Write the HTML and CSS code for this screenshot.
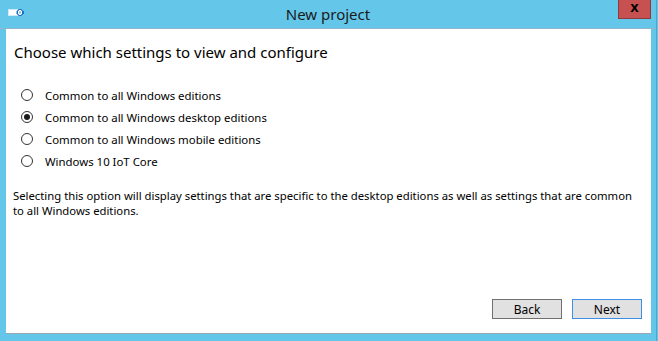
FILE: index.html
```html
<!DOCTYPE html>
<html>
<head>
<meta charset="utf-8">
<link rel="stylesheet" href="styles.css">
</head>
<body>
<div class="window">
  <div class="titlebar">
    <svg class="app-icon" width="16" height="8" viewBox="0 0 16 8">
      <rect x="0.5" y="0.5" width="10" height="6" fill="#ffffff" stroke="#cfeaf6"/>
      <path d="M9.5 1.5h1v-1h3v1h1v4h-1v1h-3v-1h-1z" fill="#ffffff" stroke="#1f6fc4" stroke-width="1"/>
      <rect x="11" y="2.5" width="2" height="2" fill="#64c7ea"/>
      <rect x="15" y="2" width="1" height="3" fill="#1f6fc4"/>
      <rect x="8.5" y="2" width="1" height="3" fill="#1f6fc4"/>
    </svg>
    <div class="title">New project</div>
    <div class="close">X</div>
  </div>
  <div class="content">
    <h1 class="heading">Choose which settings to view and configure</h1>
    <div class="options">
      <label class="option"><input type="radio" name="ed" class="radio"><span>Common to all Windows editions</span></label>
      <label class="option"><input type="radio" name="ed" class="radio" checked><span>Common to all Windows desktop editions</span></label>
      <label class="option"><input type="radio" name="ed" class="radio"><span>Common to all Windows mobile editions</span></label>
      <label class="option"><input type="radio" name="ed" class="radio"><span>Windows 10 IoT Core</span></label>
    </div>
    <p class="desc">Selecting this option will display settings that are specific to the desktop editions as well as settings that are common to all Windows editions.</p>
    <div class="buttons">
      <button class="btn">Back</button>
      <button class="btn btn-default">Next</button>
    </div>
  </div>
</div>
</body>
</html>
```
FILE: styles.css
```css
html, body {
  margin: 0;
  padding: 0;
  background: #64c7ea;
}
body {
  width: 658px;
  height: 341px;
  overflow: hidden;
  font-family: "Segoe UI", "Noto Sans", "Liberation Sans", sans-serif;
  color: #000;
}
.window {
  width: 656px;
  height: 341px;
  background: #64c7ea;
  border-right: 1px solid #4fa6c8;
  display: flex;
  flex-direction: column;
}
.titlebar {
  display: flex;
  align-items: flex-start;
  position: relative;
  border-bottom: 1px solid #8fb6cc;
  box-sizing: border-box;
  height: 29px;
}
.app-icon {
  margin: 9px 0 0 8px;
}
.title {
  position: absolute;
  left: 0;
  right: 0;
  top: 4px;
  text-align: center;
  font-size: 15px;
  line-height: 20px;
  color: #1a1a1a;
}
.close {
  position: absolute;
  left: 618px;
  top: 0;
  width: 31px;
  height: 18px;
  background: #c75050;
  border: 1px solid #8a3b3b;
  border-top: none;
  color: #000;
  font-family: "DejaVu Sans", sans-serif;
  font-weight: bold;
  font-size: 11px;
  line-height: 18px;
  text-align: center;
}
.content {
  margin-left: 6px;
  width: 645px;
  height: 305px;
  background: #fff;
  border-bottom: 1px solid #9aa7ae;
  box-sizing: border-box;
  display: flex;
  flex-direction: column;
  padding: 0 0 14px 0;
}
.heading {
  margin: 13px 0 0 8px;
  font-size: 15px;
  font-weight: normal;
  line-height: 20px;
}
.options {
  margin: 22px 0 0 15px;
  display: flex;
  flex-direction: column;
}
.option {
  display: flex;
  align-items: center;
  height: 22px;
  font-size: 11.4px;
}
.radio {
  appearance: none;
  -webkit-appearance: none;
  margin: 0 12px 0 0;
  width: 12px;
  height: 12px;
  border: 1px solid #333;
  border-radius: 50%;
  background: #fff;
  box-sizing: border-box;
  display: grid;
  place-items: center;
}
.radio:checked::after {
  content: "";
  width: 6px;
  height: 6px;
  border-radius: 50%;
  background: #1a1a1a;
}
.desc {
  margin: 16px 0 0 7px;
  width: 628px;
  font-size: 11.3px;
  line-height: 15px;
}
.buttons {
  margin-top: auto;
  display: flex;
  justify-content: flex-end;
  gap: 10px;
  padding-right: 9px;
}
.btn {
  width: 70px;
  height: 20px;
  padding: 0;
  background: #e1e1e1;
  border: 1px solid #707070;
  font-family: inherit;
  font-size: 12px;
  color: #000;
}
.btn-default {
  border-color: #3c8fe6;
}
```
